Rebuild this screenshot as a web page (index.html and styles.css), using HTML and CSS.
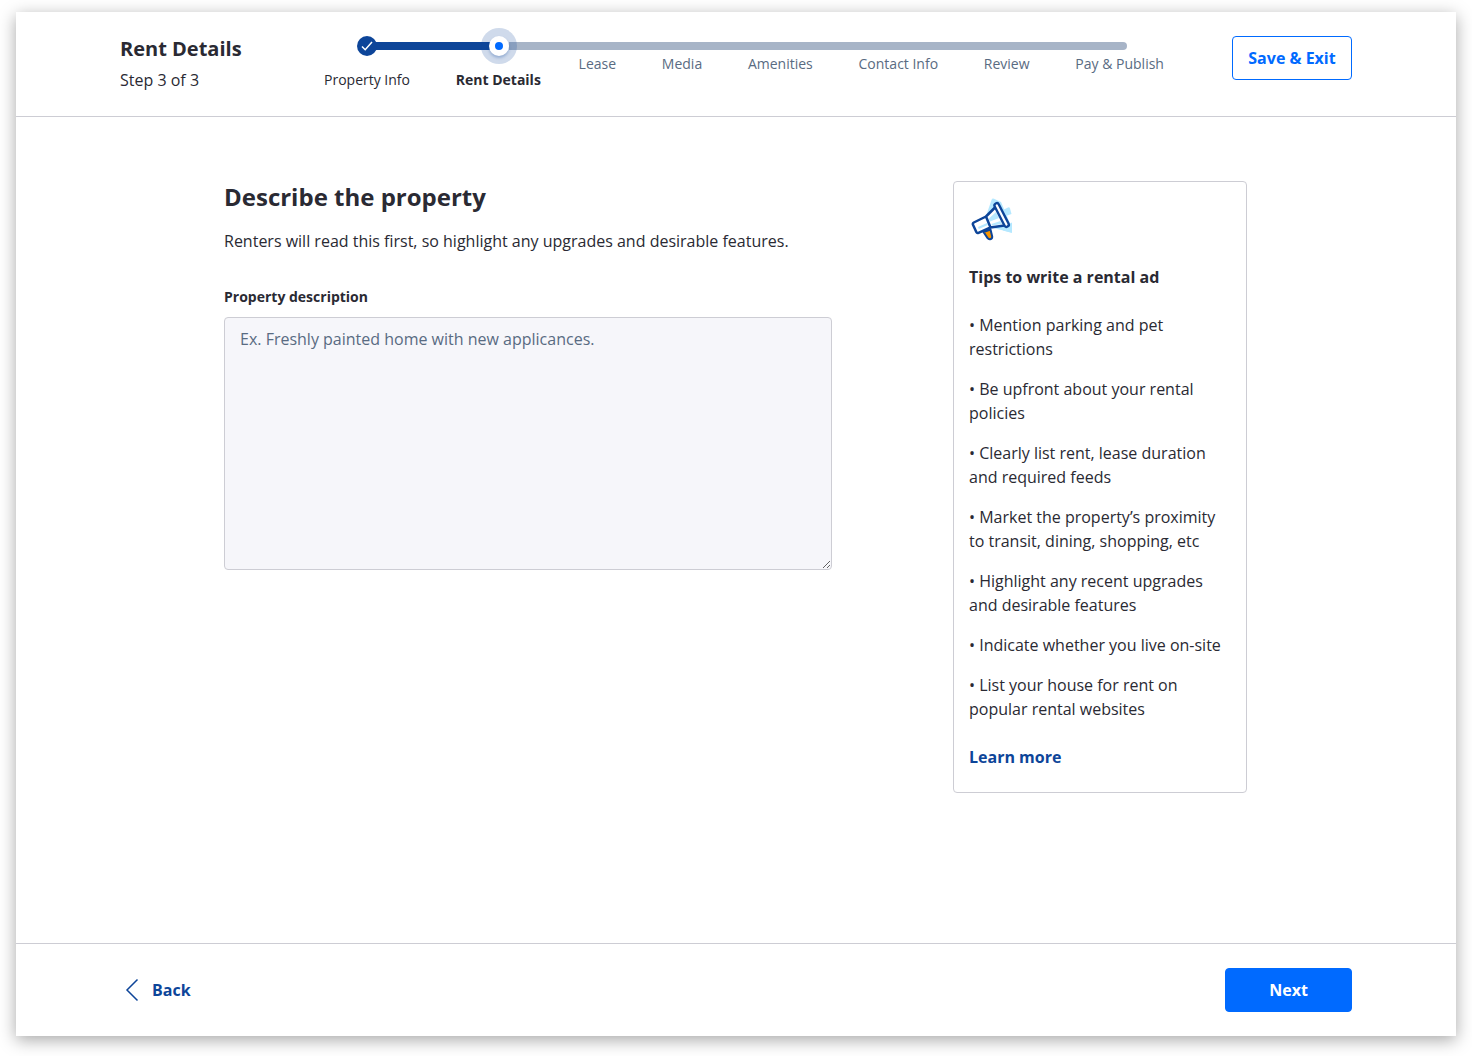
FILE: index.html
```html
<!DOCTYPE html>
<html lang="en">
<head>
    <meta charset="UTF-8">
    <meta name="viewport" content="width=device-width, initial-scale=1.0">
    <title>Rent Details</title>
    <link rel="stylesheet" href="styles.css">
</head>
<body>
    <div class="page">
        <header class="header">
            <div class="header-title">
                <h1>Rent Details</h1>
                <p>Step 3 of 3</p>
            </div>

            <nav class="stepper" aria-label="Progress">
                <div class="track">
                    <span class="marker marker-done">
                        <svg width="20" height="20" viewBox="0 0 20 20" fill="none" stroke="#fff" stroke-width="1.5">
                            <path d="M5 10.5l3.2 3.2L15 6"/>
                        </svg>
                    </span>
                    <span class="line line-done"></span>
                    <span class="marker marker-current"></span>
                    <span class="line line-todo"></span>
                </div>
                <ol class="steps">
                    <li class="done">Property Info</li>
                    <li class="current" aria-current="step">Rent Details</li>
                    <li>Lease</li>
                    <li>Media</li>
                    <li>Amenities</li>
                    <li>Contact Info</li>
                    <li>Review</li>
                    <li>Pay &amp; Publish</li>
                </ol>
            </nav>

            <button type="button" class="btn btn-outline">Save &amp; Exit</button>
        </header>

        <main class="main">
            <form class="description-form" id="description-form">
                <h2>Describe the property</h2>
                <p>Renters will read this first, so highlight any upgrades and desirable features.</p>
                <label for="description">Property description</label>
                <textarea id="description" name="description" placeholder="Ex. Freshly painted home with new applicances."></textarea>
            </form>

            <aside class="tips">
                <svg class="tips-icon" width="48" height="48" viewBox="0 0 48 48" fill="none" stroke-linecap="round" stroke-linejoin="round">
                    <path d="M17 19L22.500 3Q23.200 1 25 1.800L32 5L43 31L42.500 35.500L26 31.500z" fill="#b5e8ff"/>
                    <path d="M34 13l5-2.500q1.500-.7 2 1l1.500 5.500-5.500 2z" fill="#b5e8ff"/>
                    <path d="M35 29l8-3.500v10.500l-9-2.500z" fill="#b5e8ff"/>
                    <path d="M14.500 35l7-2.500 1.700 7q.2 2.300-2 2.800-1.700.3-2.600-1.200z" fill="#f99500" stroke="#0d4599" stroke-width="2"/>
                    <path d="M4.800 25.500L17 19.500L26.500 10L35.500 28.500L21.500 30.500L9.500 35.800Q8 36.500 7.300 35L4 27.800Q3.400 26.300 4.800 25.500z" fill="#fff"/>
                    <path d="M19.500 22l7.500-7 3 6-9 3.500zM9 30l9-4 .8 2-9 4zM22.500 27l9-3 1.500 3-10 1.500z" fill="#b5e8ff"/>
                    <path d="M17 19.500L4.800 25.500Q3.400 26.300 4 27.800L7.300 35Q8 36.500 9.500 35.800L21.500 30.500zM17 19.500L26.500 10M21.500 30.500L35.500 28.500" stroke="#0d4599" stroke-width="2.500"/>
                    <path d="M27.800 8.500L37.500 27.500" stroke="#0d4599" stroke-width="7"/>
                    <path d="M27.800 8.500L37.500 27.500" stroke="#fff" stroke-width="2.200"/>
                </svg>
                <h3>Tips to write a rental ad</h3>
                <ul>
                    <li>Mention parking and pet restrictions</li>
                    <li>Be upfront about your rental policies</li>
                    <li>Clearly list rent, lease duration and required feeds</li>
                    <li>Market the property’s proximity to transit, dining, shopping, etc</li>
                    <li>Highlight any recent upgrades and desirable features</li>
                    <li>Indicate whether you live on-site</li>
                    <li>List your house for rent on popular rental websites</li>
                </ul>
                <a href="#">Learn more</a>
            </aside>
        </main>

        <footer class="footer">
            <a href="#" class="back">
                <svg width="24" height="24" viewBox="0 0 24 24" fill="none" stroke="currentColor" stroke-width="1.5">
                    <path d="M17.500 1.500L7 12l10.500 10.500"/>
                </svg>
                Back
            </a>
            <button type="submit" form="description-form" class="btn btn-primary">Next</button>
        </footer>
    </div>
</body>
</html>
```

FILE: styles.css
```css
* { box-sizing: border-box; }
body { margin: 0; padding: 12px 16px 20px; background: #fff; color: #2a2a33; font-family: "Open Sans", sans-serif; font-size: 16px; line-height: 24px; }
h1, h2, h3, p, ul, ol { margin: 0; padding: 0; }
ul, ol { list-style: none; }
a { color: #0d4599; font-weight: 700; text-decoration: none; }
a:hover { text-decoration: underline; }

.page { display: flex; flex-direction: column; min-height: calc(100vh - 32px); background: #fff; box-shadow: 0 4px 16px rgba(0, 0, 0, 0.35); }

/* Header */
.header { display: grid; grid-template-columns: 136px 1fr 120px; column-gap: 68px; align-items: start; padding: 24px 104px; border-bottom: 1px solid #cdcdd4; }
.header h1 { font-size: 20px; line-height: 26px; white-space: nowrap; }
.header-title p { margin-top: 6px; }

.btn { height: 44px; padding: 0; border: 1px solid #006aff; border-radius: 4px; font: inherit; font-weight: 700; cursor: pointer; }
.btn-outline { background: #fff; color: #006aff; }
.btn-primary { width: 127px; background: #006aff; color: #fff; }

/* Progress */
.track { display: flex; align-items: center; margin: 0 37px 0 33px; }
.marker { position: relative; flex: none; width: 20px; height: 20px; border-radius: 50%; }
.marker svg { display: block; }
.marker-done { background: #0d4599; }
.marker-current { z-index: 1; border: 6px solid #fff; background: #006aff; box-shadow: 0 2px 3px rgba(13, 69, 153, 0.3), 0 0 0 8px rgba(13, 69, 153, 0.2); }
.line { height: 8px; }
.line-done { width: 116px; margin: 0 -2px; background: #0d4599; }
.line-todo { flex: 1; border-radius: 0 4px 4px 0; background: #a7b4c7; }
.steps { display: flex; justify-content: space-between; font-size: 14px; line-height: 16px; color: #596b82; white-space: nowrap; }
.steps .done, .steps .current { padding-top: 16px; color: #2a2a33; }
.steps .current { margin-right: -8px; font-weight: 700; }

/* Content */
.main { flex: 1; display: flex; align-items: flex-start; gap: 121px; width: 100%; max-width: 1088px; margin: 0 auto; padding: 64px 32px; }
.description-form { flex: 0 1 608px; }
.description-form h2 { font-size: 24px; line-height: 32px; }
.description-form p { margin-top: 16px; }
.description-form label { display: block; margin: 32px 0 8px; font-size: 14px; font-weight: 700; }
textarea { display: block; width: 100%; height: 253px; padding: 9px 15px; border: 1px solid #cdcdd4; border-radius: 4px; background: #f6f6fa; color: #2a2a33; font: inherit; resize: both; }
textarea::placeholder { color: #596b82; }

.tips { flex: 0 0 294px; padding: 15px 15px 23px; border: 1px solid #cdcdd4; border-radius: 4px; }
.tips-icon { display: block; }
.tips h3 { margin: 20px 0 24px; font-size: 16px; }
.tips li { margin-bottom: 16px; }
.tips li::before { content: "• "; }
.tips a { display: block; margin-top: 24px; }

/* Footer */
.footer { display: flex; justify-content: space-between; align-items: center; padding: 24px 104px; border-top: 1px solid #cdcdd4; }
.back { display: flex; align-items: center; gap: 8px; }
```
